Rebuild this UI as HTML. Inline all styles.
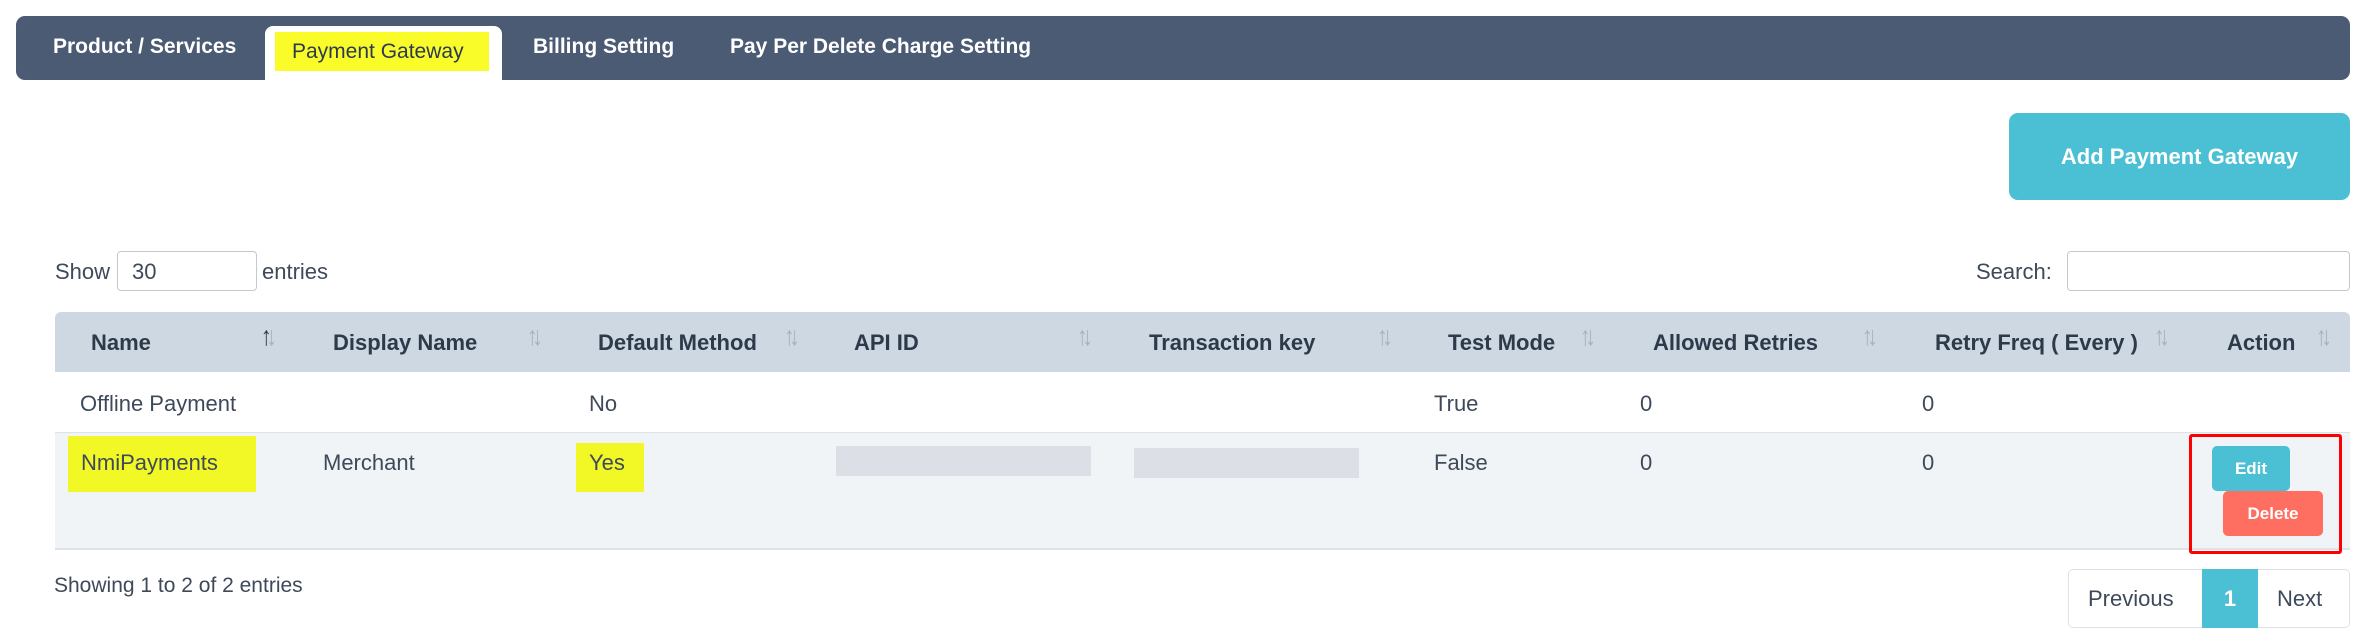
<!DOCTYPE html>
<html><head><meta charset="utf-8"><style>
*{margin:0;padding:0;box-sizing:border-box}
body{width:2378px;height:642px;background:#fff;position:relative;overflow:hidden;font-family:"Liberation Sans",sans-serif;color:#3e4a5a;font-size:22px}
.a{position:absolute;white-space:nowrap}
.nav{left:16px;top:16px;width:2334px;height:64px;background:#4a5b73;border-radius:9px}
.tab{color:#fff;font-weight:bold;font-size:21px;line-height:22px}
.th{font-weight:bold;color:#2d3a4a;line-height:22px;top:332px}
.srt{top:322px;color:#a8b2bd;font-size:27px;line-height:28px;letter-spacing:-7px;transform:scaleX(0.8);transform-origin:left}
.r1{top:393px;line-height:22px}
.r2{top:452px;line-height:22px}
.inp{border:1px solid #c4c8d0;border-radius:4px;background:#fff}
</style></head><body>
<div class="a nav"></div>
<div class="a" style="left:265px;top:26px;width:237px;height:56px;background:#fff;border-radius:8px 8px 0 0"></div>
<div class="a" style="left:275px;top:32px;width:214px;height:39px;background:#fafc2a"></div>
<div class="a tab" style="left:53px;top:36px">Product / Services</div>
<div class="a tab" style="left:292px;top:41px;color:#2b3a4d;font-weight:normal">Payment Gateway</div>
<div class="a tab" style="left:533px;top:36px">Billing Setting</div>
<div class="a tab" style="left:730px;top:36px">Pay Per Delete Charge Setting</div>

<div class="a" style="left:2009px;top:113px;width:341px;height:87px;background:#4bbfd3;border-radius:9px;color:#fff;font-weight:bold;font-size:22px;line-height:87px;text-align:center">Add Payment Gateway</div>

<div class="a" style="left:55px;top:261px;line-height:22px">Show</div>
<div class="a inp" style="left:117px;top:251px;width:140px;height:40px"></div>
<div class="a" style="left:132px;top:261px;line-height:22px">30</div>
<div class="a" style="left:262px;top:261px;line-height:22px">entries</div>
<div class="a" style="left:1976px;top:261px;line-height:22px">Search:</div>
<div class="a inp" style="left:2067px;top:251px;width:283px;height:40px"></div>

<div class="a" style="left:55px;top:312px;width:2295px;height:60px;background:#ced8e2;border-radius:6px 6px 0 0"></div>
<div class="a th" style="left:91px">Name</div>
<div class="a th" style="left:333px">Display Name</div>
<div class="a th" style="left:598px">Default Method</div>
<div class="a th" style="left:854px">API ID</div>
<div class="a th" style="left:1149px">Transaction key</div>
<div class="a th" style="left:1448px">Test Mode</div>
<div class="a th" style="left:1653px">Allowed Retries</div>
<div class="a th" style="left:1935px">Retry Freq ( Every )</div>
<div class="a th" style="left:2227px">Action</div>
<div class="a srt" style="left:261px"><span style="color:#2d3a4a">↑</span>↓</div>
<div class="a srt" style="left:527px">↑↓</div>
<div class="a srt" style="left:784px">↑↓</div>
<div class="a srt" style="left:1077px">↑↓</div>
<div class="a srt" style="left:1377px">↑↓</div>
<div class="a srt" style="left:1580px">↑↓</div>
<div class="a srt" style="left:1862px">↑↓</div>
<div class="a srt" style="left:2154px">↑↓</div>
<div class="a srt" style="left:2316px">↑↓</div>

<div class="a r1" style="left:80px">Offline Payment</div>
<div class="a r1" style="left:589px">No</div>
<div class="a r1" style="left:1434px">True</div>
<div class="a r1" style="left:1640px">0</div>
<div class="a r1" style="left:1922px">0</div>

<div class="a" style="left:55px;top:432px;width:2295px;height:118px;background:#f0f4f7;border-top:1px solid #dde3e8;border-bottom:2px solid #dde3e8"></div>
<div class="a" style="left:68px;top:436px;width:188px;height:56px;background:#f2f726"></div>
<div class="a" style="left:576px;top:443px;width:68px;height:49px;background:#f2f726"></div>
<div class="a" style="left:836px;top:446px;width:255px;height:30px;background:#dcdfe5"></div>
<div class="a" style="left:1134px;top:448px;width:225px;height:30px;background:#dcdfe5"></div>
<div class="a r2" style="left:81px">NmiPayments</div>
<div class="a r2" style="left:323px">Merchant</div>
<div class="a r2" style="left:589px">Yes</div>
<div class="a r2" style="left:1434px">False</div>
<div class="a r2" style="left:1640px">0</div>
<div class="a r2" style="left:1922px">0</div>

<div class="a" style="left:2189px;top:434px;width:153px;height:120px;border:3px solid #f00;border-radius:3px"></div>
<div class="a" style="left:2212px;top:446px;width:78px;height:45px;background:#4bbfd3;border-radius:5px;color:#fff;font-weight:bold;font-size:17px;line-height:45px;text-align:center">Edit</div>
<div class="a" style="left:2223px;top:491px;width:100px;height:45px;background:#fe6f61;border-radius:5px;color:#fff;font-weight:bold;font-size:17px;line-height:45px;text-align:center">Delete</div>

<div class="a" style="left:54px;top:575px;font-size:21px;line-height:22px">Showing 1 to 2 of 2 entries</div>
<div class="a" style="left:2068px;top:569px;width:282px;height:59px;border:1px solid #dde2e8;border-radius:5px"></div>
<div class="a" style="left:2202px;top:569px;width:56px;height:59px;background:#4bbfd3;color:#fff;font-weight:bold;text-align:center;line-height:59px">1</div>
<div class="a" style="left:2088px;top:569px;line-height:59px;color:#3e4a5a">Previous</div>
<div class="a" style="left:2277px;top:569px;line-height:59px">Next</div>
</body></html>
